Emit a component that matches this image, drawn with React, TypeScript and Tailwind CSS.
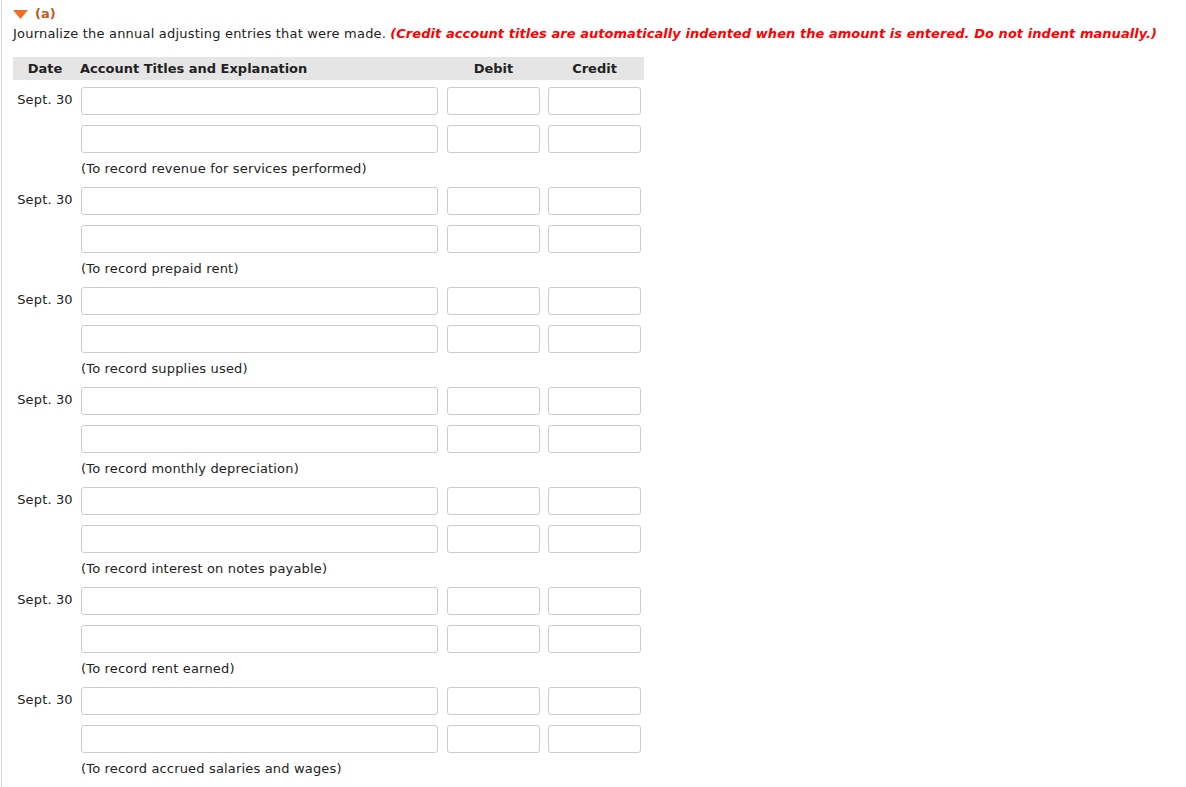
import React from "react";

const entries = [
  "(To record revenue for services performed)",
  "(To record prepaid rent)",
  "(To record supplies used)",
  "(To record monthly depreciation)",
  "(To record interest on notes payable)",
  "(To record rent earned)",
  "(To record accrued salaries and wages)",
];

function Box({ w }: { w: string }) {
  return (
    <input
      type="text"
      className={`${w} h-[28px] rounded-[3px] border border-[#cccccc] bg-white outline-none`}
    />
  );
}

function Line({ date }: { date?: string }) {
  return (
    <div className="flex items-center">
      <div className="w-[68px] text-center pr-[4px] pb-[2px] tracking-[0.15px]">{date}</div>
      <Box w="w-[357px]" />
      <div className="w-[9px]" />
      <Box w="w-[93px]" />
      <div className="w-[8px]" />
      <Box w="w-[93px]" />
    </div>
  );
}

export default function App() {
  return (
    <div
      className="min-h-[787px] bg-white text-[13px] text-[#222222]"
      style={{ fontFamily: '"DejaVu Sans", Verdana, sans-serif' }}
    >
      <div className="ml-px border-l border-[#d5dbe3] pl-[11px] pt-[5px] pb-[8px]">
        {/* part heading */}
        <div className="flex items-center h-[18px] gap-[7px]">
          <svg width="15" height="10" viewBox="0 0 15 10" className="mt-[1px]">
            <polygon points="0,0 15,0 7.5,9" fill="#f26c22" />
          </svg>
          <span className="font-bold text-[#c4581c]">(a)</span>
        </div>

        <p className="leading-[18px] mt-[2px]">
          <span className="tracking-[0.2px]">Journalize the annual adjusting entries that were made.</span>{" "}
          <span className="font-bold italic text-[#ff0000] tracking-[0.05px]">
            (Credit account titles are automatically indented when the amount is entered. Do not indent manually.)
          </span>
        </p>

        <div className="w-[631px] mt-[14px]">
          <div className="flex items-center h-[23px] bg-[#e5e5e5] font-bold">
            <div className="w-[64px] text-center">Date</div>
            <div className="w-[370px] pl-[3px]">Account Titles and Explanation</div>
            <div className="w-[93px] text-center">Debit</div>
            <div className="w-[8px]" />
            <div className="w-[93px] text-center">Credit</div>
          </div>

          {entries.map((e) => (
            <div key={e} className="pt-[7px] pb-[3px]">
              <Line date="Sept. 30" />
              <div className="mt-[10px]">
                <Line />
              </div>
              <div className="mt-[7px] mb-[-1px] leading-[18px] pl-[68px] tracking-[0.17px]">{e}</div>
            </div>
          ))}
        </div>
      </div>
    </div>
  );
}
